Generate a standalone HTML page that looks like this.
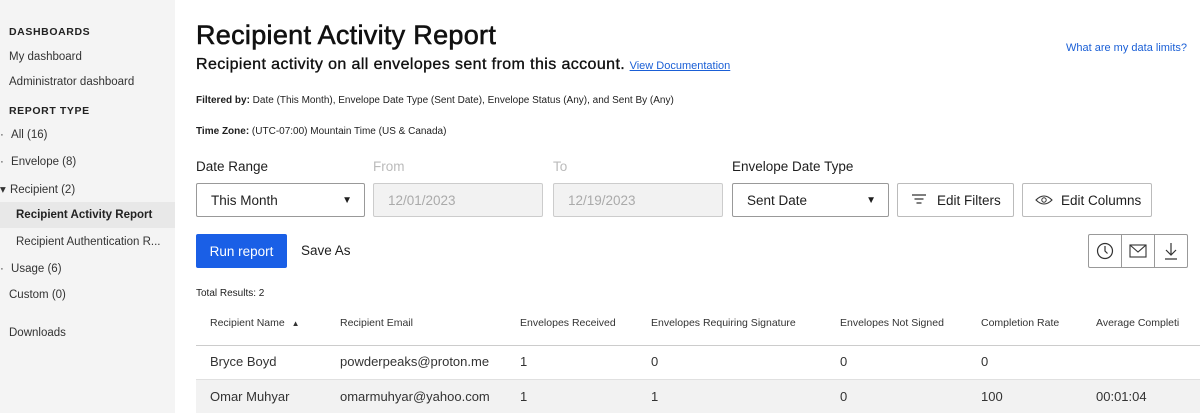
<!DOCTYPE html>
<html><head><style>
*{box-sizing:border-box;margin:0;padding:0}
body{width:1200px;height:413px;overflow:hidden;font-family:"Liberation Sans",sans-serif;color:#1e1e1e;background:#fff;position:relative}
.sb{position:absolute;left:0;top:0;width:175px;height:413px;background:#f4f4f4;font-size:11.5px;color:#333}
.sb div{position:absolute;left:9px;white-space:nowrap}
.h{font-weight:bold;font-size:10.5px;letter-spacing:.6px;color:#222}
.a{position:absolute;white-space:nowrap}
.btn{position:absolute;border:1px solid #bbb;border-radius:2px;background:#fff;font-size:13.5px;display:flex;align-items:center}
.th{position:absolute;top:317px;font-size:10.5px;color:#333;white-space:nowrap}
.td{position:absolute;font-size:13px;color:#333;white-space:nowrap}
</style></head><body>
<div class="sb">
<div class="h" style="top:26px">DASHBOARDS</div>
<div style="top:51px">My dashboard</div>
<div style="top:76px">Administrator dashboard</div>
<div class="h" style="top:105px">REPORT TYPE</div>
<div style="top:129px;left:0">· <span style="margin-left:4px">All (16)</span></div>
<div style="top:156px;left:0">· <span style="margin-left:4px">Envelope (8)</span></div>
<div style="top:182px;left:0">▾ <span style="margin-left:1px">Recipient (2)</span></div>
<div style="top:202px;left:0;width:175px;height:26px;background:#e8e8e8"></div>
<div style="top:209px;left:16px;font-weight:bold;color:#222">Recipient Activity Report</div>
<div style="top:236px;left:16px">Recipient Authentication R...</div>
<div style="top:263px;left:0">· <span style="margin-left:4px">Usage (6)</span></div>
<div style="top:289px">Custom (0)</div>
<div style="top:327px">Downloads</div>
</div>
<div class="a" style="left:196px;top:20px;font-size:27px;color:#111;-webkit-text-stroke:0.6px #111;letter-spacing:0.3px">Recipient Activity Report</div>
<div class="a" style="left:1066px;top:42px;font-size:11px;color:#1a5fd6">What are my data limits?</div>
<div class="a" style="left:196px;top:56px;font-size:16px;color:#111"><span style="-webkit-text-stroke:0.35px #111;letter-spacing:0.4px">Recipient activity on all envelopes sent from this account.</span> <span style="font-size:11px;color:#1a5fd6;text-decoration:underline">View Documentation</span></div>
<div class="a" style="left:196px;top:95px;font-size:10px"><b>Filtered by:</b> Date (This Month), Envelope Date Type (Sent Date), Envelope Status (Any), and Sent By (Any)</div>
<div class="a" style="left:196px;top:126px;font-size:10px"><b>Time Zone:</b> (UTC-07:00) Mountain Time (US &amp; Canada)</div>
<div class="a" style="left:196px;top:159px;font-size:13.5px">Date Range</div>
<div class="a" style="left:373px;top:159px;font-size:13.5px;color:#bbb">From</div>
<div class="a" style="left:553px;top:159px;font-size:13.5px;color:#bbb">To</div>
<div class="a" style="left:732px;top:159px;font-size:13.5px">Envelope Date Type</div>
<div class="btn" style="left:196px;top:183px;width:169px;height:34px;padding-left:14px;border-color:#999">This Month<span style="position:absolute;right:12px;font-size:10px">▼</span></div>
<div class="btn" style="left:373px;top:183px;width:170px;height:34px;padding-left:14px;background:#f2f2f2;color:#aaa;border-color:#ccc">12/01/2023</div>
<div class="btn" style="left:553px;top:183px;width:170px;height:34px;padding-left:14px;background:#f2f2f2;color:#aaa;border-color:#ccc">12/19/2023</div>
<div class="btn" style="left:732px;top:183px;width:157px;height:34px;padding-left:14px;border-color:#999">Sent Date<span style="position:absolute;right:12px;font-size:10px">▼</span></div>
<div class="btn" style="left:897px;top:183px;width:117px;height:34px;padding-left:13px"><svg width="16" height="12" style="margin-right:10px"><path d="M1 1H15M3.5 5H12.5M5.5 9H10.5" stroke="#333" stroke-width="1.3"/></svg>Edit Filters</div>
<div class="btn" style="left:1022px;top:183px;width:130px;height:34px;padding-left:12px"><svg width="18" height="12" style="margin-right:8px"><path d="M1 6Q9 -2 17 6Q9 14 1 6Z" fill="none" stroke="#333" stroke-width="1.1"/><circle cx="9" cy="6" r="2.2" fill="none" stroke="#333"/></svg>Edit Columns</div>
<div class="a" style="left:196px;top:234px;width:91px;height:34px;background:#1a5fe6;color:#fff;border-radius:2px;font-size:13.5px;display:flex;align-items:center;justify-content:center">Run report</div>
<div class="a" style="left:301px;top:243px;font-size:13.5px">Save As</div>
<div class="btn" style="left:1088px;top:234px;width:100px;height:34px;border-color:#999">
<div style="width:33px;height:32px;display:flex;align-items:center;justify-content:center;border-right:1px solid #999"><svg width="18" height="18"><circle cx="9" cy="9" r="7.5" fill="none" stroke="#333" stroke-width="1.2"/><path d="M9 4V9L11.5 11.5" fill="none" stroke="#333" stroke-width="1.2"/></svg></div>
<div style="width:33px;height:32px;display:flex;align-items:center;justify-content:center;border-right:1px solid #999"><svg width="18" height="14"><rect x="1" y="1" width="16" height="12" fill="none" stroke="#333" stroke-width="1.1"/><path d="M1 1L9 8L17 1" fill="none" stroke="#333" stroke-width="1.1"/></svg></div>
<div style="width:32px;height:32px;display:flex;align-items:center;justify-content:center"><svg width="16" height="18"><path d="M8 1V13M3 8L8 13L13 8M2 17H14" fill="none" stroke="#333" stroke-width="1.2"/></svg></div>
</div>
<div class="a" style="left:196px;top:288px;font-size:10px">Total Results: 2</div>
<div class="th" style="left:210px">Recipient Name <span style="font-size:8px;margin-left:4px">▲</span></div>
<div class="th" style="left:340px">Recipient Email</div>
<div class="th" style="left:520px">Envelopes Received</div>
<div class="th" style="left:651px">Envelopes Requiring Signature</div>
<div class="th" style="left:840px">Envelopes Not Signed</div>
<div class="th" style="left:981px">Completion Rate</div>
<div class="th" style="left:1096px">Average Completi</div>
<div class="a" style="left:196px;top:345px;width:1004px;height:1px;background:#ccc"></div>
<div class="a" style="left:196px;top:379px;width:1004px;height:34px;background:#f2f2f2;border-top:1px solid #e0e0e0"></div>
<div class="td" style="left:210px;top:354px">Bryce Boyd</div>
<div class="td" style="left:340px;top:354px">powderpeaks@proton.me</div>
<div class="td" style="left:520px;top:354px">1</div>
<div class="td" style="left:651px;top:354px">0</div>
<div class="td" style="left:840px;top:354px">0</div>
<div class="td" style="left:981px;top:354px">0</div>
<div class="td" style="left:210px;top:389px">Omar Muhyar</div>
<div class="td" style="left:340px;top:389px">omarmuhyar@yahoo.com</div>
<div class="td" style="left:520px;top:389px">1</div>
<div class="td" style="left:651px;top:389px">1</div>
<div class="td" style="left:840px;top:389px">0</div>
<div class="td" style="left:981px;top:389px">100</div>
<div class="td" style="left:1096px;top:389px">00:01:04</div>
</body></html>
